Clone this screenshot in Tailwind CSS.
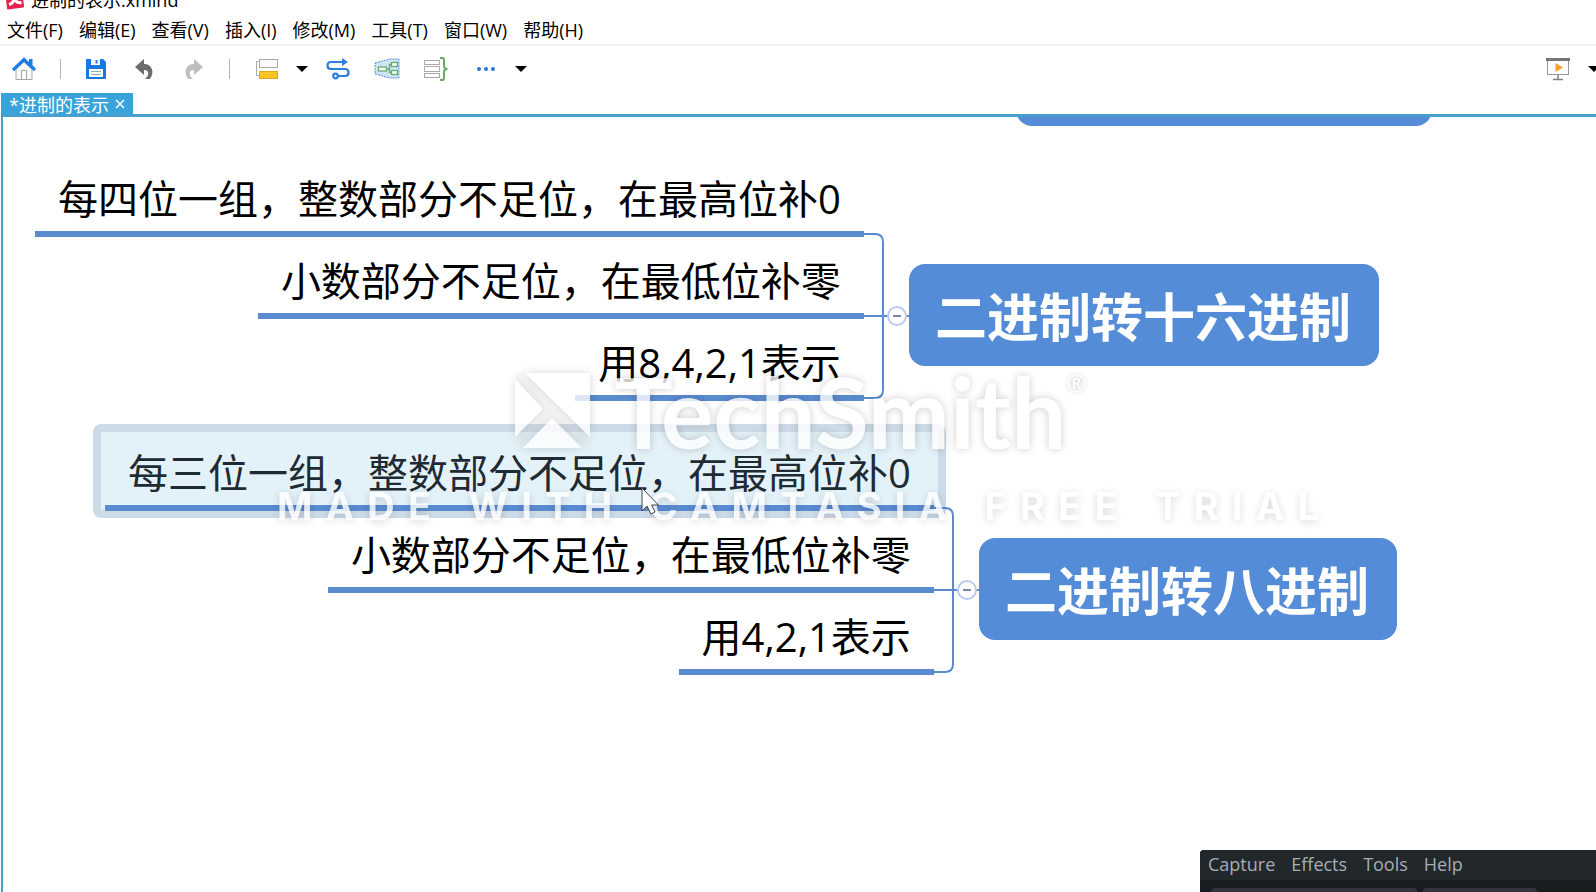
<!DOCTYPE html>
<html lang="zh-CN">
<head>
    <meta charset="UTF-8">
    <meta name="viewport" content="width=device-width, initial-scale=1.0">
    <title>进制的表示.xmind</title>
    <script src="https://cdn.jsdelivr.net/npm/@tailwindcss/browser@4"></script>
</head>
<body class="h-screen flex flex-col overflow-hidden bg-white text-black font-['Open_Sans','Noto_Sans_CJK_SC',sans-serif]">
    <!-- Title bar -->
    <div class="h-3.5 shrink-0 flex items-end gap-1.5 pl-[5px] pb-1 overflow-hidden">
        <svg class="w-5 h-5 shrink-0" viewBox="0 0 20 20">
            <path d="M0 2 L17 0 L19 16 Q19 17.500 18 17.500 L3 19.500 Q2 19.500 2 18 Z" fill="#e5214d"/>
            <path d="M4 14.500 Q8 13.500 9.500 9 Q12 13.500 16.500 12.500 M7 4 L9.500 9 L13 5" fill="none" stroke="#fff" stroke-width="3"/>
        </svg>
        <span class="text-lg leading-5 whitespace-nowrap">进制的表示.xmind</span>
    </div>

    <!-- Menu bar -->
    <nav class="h-8 shrink-0 flex items-center gap-4 pl-[7px] pt-0.5 border-b-2 border-[#f1f1f1] text-lg leading-6 whitespace-nowrap">
        <a href="#">文件(F)</a>
        <a href="#">编辑(E)</a>
        <a href="#">查看(V)</a>
        <a href="#">插入(I)</a>
        <a href="#">修改(M)</a>
        <a href="#">工具(T)</a>
        <a href="#">窗口(W)</a>
        <a href="#">帮助(H)</a>
    </nav>

    <!-- Toolbar -->
    <div class="h-[47px] shrink-0 flex items-center gap-6 pl-3 pb-0.5 overflow-hidden">
        <button aria-label="主页">
            <svg class="w-6 h-6" viewBox="0 0 24 24">
                <path d="M4 12 V22.500 H20 V12 L12 5 Z" fill="#fafafa" stroke="#a5a5a5"/>
                <path d="M9.500 22 V13.500 H14.500 V22" fill="#fff" stroke="#a5a5a5"/>
                <path d="M17 2 H20.500 V9 H17 Z" fill="#1f7de6"/>
                <path d="M1 13 L12 2.500 L23 13" fill="none" stroke="#1f7de6" stroke-width="3.200"/>
            </svg>
        </button>
        <span class="w-px h-5 bg-[#b5b5b5]"></span>
        <button aria-label="保存">
            <svg class="w-6 h-6" viewBox="0 0 24 24">
                <path d="M1 3 Q1 2 2 2 H18 L21 5 V21 Q21 22 20 22 H2 Q1 22 1 21 Z" fill="#1878e2"/>
                <path d="M6 2 H15 V8 H6 Z" fill="#fff"/>
                <path d="M10.500 3 H12.500 V6.500 H10.500 Z" fill="#1878e2"/>
                <path d="M4 12 H18 V20 H4 Z" fill="#fff"/>
                <path d="M6 14.500 H16 M6 17.500 H16" stroke="#9aa7b5"/>
            </svg>
        </button>
        <button aria-label="撤销">
            <svg class="w-6 h-6" viewBox="0 0 24 24">
                <path d="M2 10 L11 2 V7 C19 7 22 15 17 22 H12 C17 18 16 13 11 13 V18 Z" fill="#6c6c6c"/>
            </svg>
        </button>
        <button aria-label="重做">
            <svg class="w-6 h-6" viewBox="0 0 24 24">
                <path d="M22 10 L13 2 V7 C5 7 2 15 7 22 H12 C7 18 8 13 13 13 V18 Z" fill="#bebebe"/>
            </svg>
        </button>
        <span class="w-px h-5 bg-[#b5b5b5]"></span>
        <div class="flex items-center gap-[18px] -mr-1.5">
            <button aria-label="主题">
                <svg class="w-6 h-6" viewBox="0 0 24 24">
                    <path d="M5 4.500 H2.500 V18.500 H5" fill="none" stroke="#aaa"/>
                    <rect x="5.500" y="2.500" width="18" height="8" fill="#fafafa" stroke="#aaa"/>
                    <rect x="5.500" y="14.500" width="18" height="7" fill="#fcc622" stroke="#dfa51c"/>
                </svg>
            </button>
            <button aria-label="更多主题">
                <svg class="w-3 h-3" viewBox="0 0 12 12"><path d="M0 3 H12 L6 9 Z"/></svg>
            </button>
        </div>
        <button aria-label="联系">
            <svg class="w-6 h-6" viewBox="0 0 24 24" fill="none" stroke="#2a80dc" stroke-width="2.200">
                <path d="M17 5 H5 Q1.500 5 1.500 8.500 Q1.500 12 5 12 H19 Q22.500 12 22.500 15.500 Q22.500 19 19 19 H12"/>
                <circle cx="9.500" cy="19" r="2.300"/>
                <path d="M16 1 L22 5 L16 9 Z" fill="#2a80dc" stroke="none"/>
            </svg>
        </button>
        <button aria-label="外框">
            <svg class="w-[26px] h-6" viewBox="0 0 26 24" fill="none">
                <path d="M1 6 L16 2 H25 V21 H16 L1 17 Z" fill="#cfe5f7" stroke="#4a90d9" stroke-dasharray="2 1"/>
                <g stroke="#64ad62" stroke-width="1.300">
                    <path d="M13 12 H15.500 M19 7.500 H15.500 V15.500 H19"/>
                    <rect x="4.500" y="10" width="8" height="4" fill="#fff"/>
                    <rect x="17.500" y="5.500" width="6" height="4" fill="#fff"/>
                    <rect x="17.500" y="13.500" width="6" height="4" fill="#fff"/>
                </g>
            </svg>
        </button>
        <button aria-label="概要">
            <svg class="w-6 h-6" viewBox="0 0 24 24" fill="none">
                <g stroke="#aaa">
                    <rect x="0.500" y="3.500" width="15" height="4"/>
                    <rect x="0.500" y="9.500" width="15" height="5"/>
                    <rect x="0.500" y="16.500" width="15" height="4"/>
                </g>
                <path d="M16 1 H18.500 Q20 1 20 3 V9 Q20 12 23.500 12 Q20 12 20 15 V21 Q20 23 18.500 23 H16" stroke="#64ad62" stroke-width="2"/>
            </svg>
        </button>
        <div class="flex items-center gap-[18px] pl-px">
            <button aria-label="更多">
                <svg class="w-6 h-6" viewBox="0 0 24 24" fill="#2a78d4">
                    <circle cx="6" cy="12" r="2"/><circle cx="13" cy="12" r="2"/><circle cx="20" cy="12" r="2"/>
                </svg>
            </button>
            <button aria-label="展开更多">
                <svg class="w-3 h-3" viewBox="0 0 12 12"><path d="M0 3 H12 L6 9 Z"/></svg>
            </button>
        </div>
        <div class="ml-auto flex items-center gap-[18px] -mr-1">
            <button aria-label="演示">
                <svg class="w-6 h-6" viewBox="0 0 24 24">
                    <path d="M12 17 V22 M7 22.500 H17" stroke="#7d8380" stroke-width="1.500"/>
                    <rect x="1.500" y="3.500" width="21" height="14" fill="#fcfcfc" stroke="#9a9a9a"/>
                    <rect x="0" y="1" width="24" height="3" fill="#767676"/>
                    <path d="M9.500 6 L17 10.500 L9.500 15 Z" fill="#f5a12c"/>
                </svg>
            </button>
            <button aria-label="演示选项">
                <svg class="w-3 h-3" viewBox="0 0 12 12"><path d="M0 3 H12 L6 9 Z"/></svg>
            </button>
        </div>
    </div>

    <!-- Editor tab -->
    <div class="h-[21px] shrink-0 flex pl-px">
        <div class="flex items-center gap-1.5 px-2 bg-[#3aa3da] text-white text-lg leading-5 whitespace-nowrap">
            <span class="pt-0.5">*进制的表示</span>
            <button aria-label="关闭">
                <svg class="w-2.5 h-2.5" viewBox="0 0 10 10"><path d="M1 1 L9 9 M9 1 L1 9" stroke="#fff" stroke-width="1.500"/></svg>
            </button>
        </div>
    </div>

    <!-- Map canvas -->
    <main class="relative flex-1 ml-px border-t-3 border-l-2 border-[#469fce] overflow-hidden">
        <div class="absolute left-[1013px] -top-10 w-[416px] h-[49px] rounded-2xl bg-[#558cd8]"></div>

        <!-- Binary to hex -->
        <section class="absolute isolate left-8 top-[38px] flex items-start whitespace-nowrap">
            <ul class="flex flex-col items-end text-[40px] leading-[64px]">
                <li class="h-[82px] pt-3 px-[23px] border-b-6 border-[#5a8bd0]">每四位一组，整数部分不足位，在最高位补0</li>
                <li class="h-[82px] pt-3 px-[23px] border-b-6 border-[#5a8bd0]">小数部分不足位，在最低位补零</li>
                <li class="h-[82px] pt-3 px-[23px] border-b-6 border-[#5a8bd0]">用8,4,2,1表示</li>
            </ul>
            <svg class="w-[45px] h-[246px]" viewBox="0 0 45 246" fill="none">
                <path d="M0 79 H11 Q19 79 19 87 V235 Q19 243 11 243 H0 M0 161 H45" stroke="#5a8bd0" stroke-width="2"/>
                <circle cx="33" cy="161" r="9" fill="#fff" stroke="#b9caf0" stroke-width="2"/>
                <path d="M29 161 H37" stroke="#7d87a8" stroke-width="2"/>
            </svg>
            <h2 class="mt-[109px] h-[102px] pl-[26px] pr-7 rounded-2xl bg-[#558cd8] text-white text-[52px] leading-[106px] font-bold">二进制转十六进制</h2>
        </section>

        <!-- Binary to octal -->
        <section class="absolute isolate left-[102px] top-[312px] flex items-start whitespace-nowrap">
            <ul class="flex flex-col items-end text-[40px] leading-[64px]">
                <li class="relative h-[82px] pt-3 px-[23px] border-b-6 border-[#5a8bd0] text-[#1f2b33]">
                    <div class="absolute -z-10 -inset-x-3 -top-[5px] -bottom-[13px] rounded-lg border-8 border-[#cddbe8] bg-[#e3f1f9]"></div>
                    每三位一组，整数部分不足位，在最高位补0
                </li>
                <li class="h-[82px] pt-3 px-[23px] border-b-6 border-[#5a8bd0]">小数部分不足位，在最低位补零</li>
                <li class="h-[82px] pt-3 px-[23px] border-b-6 border-[#5a8bd0]">用4,2,1表示</li>
            </ul>
            <svg class="w-[45px] h-[246px]" viewBox="0 0 45 246" fill="none">
                <path d="M0 79 H11 Q19 79 19 87 V235 Q19 243 11 243 H0 M0 161 H45" stroke="#5a8bd0" stroke-width="2"/>
                <circle cx="33" cy="161" r="9" fill="#fff" stroke="#b9caf0" stroke-width="2"/>
                <path d="M29 161 H37" stroke="#7d87a8" stroke-width="2"/>
            </svg>
            <h2 class="mt-[109px] h-[102px] pl-[26px] pr-7 rounded-2xl bg-[#558cd8] text-white text-[52px] leading-[106px] font-bold">二进制转八进制</h2>
        </section>

        <!-- Watermark -->
        <div class="absolute left-[512px] top-[248px] flex items-start gap-6 text-white opacity-80 pointer-events-none whitespace-nowrap">
            <svg class="mt-2 w-[75px] h-[75px] overflow-visible drop-shadow-[0_0_5px_rgb(0_0_0/0.2)]" viewBox="0 0 75 75" fill="#fff">
                <path d="M0 0 H75 V75 H0 Z" fill="#ddd" fill-opacity="0.200"/>
                <path d="M10 0 H75 V64 Z"/>
                <path d="M0 6 L28 36 L0 64 Z"/>
                <path d="M37 45 L67 75 H8 Z"/>
            </svg>
            <div class="flex items-start">
                <span class="text-[98px] leading-[92px] font-bold font-[Lato] text-shadow-[0_0_8px_rgb(0_0_0/0.25)]">TechSmith</span>
                <span class="text-2xl leading-9 text-shadow-[0_0_4px_rgb(0_0_0/0.3)]">®</span>
            </div>
        </div>
        <div class="absolute left-[274px] top-[361px] flex gap-6 text-white opacity-80 font-[Inter] text-[38px] leading-[56px] font-bold tracking-[0.35em] pointer-events-none whitespace-nowrap text-shadow-[0_2px_8px_rgb(0_0_0/0.2)]">
            <span>MADE</span>
            <span>WITH</span>
            <span>CAMTASIA</span>
            <span>FREE</span>
            <span>TRIAL</span>
        </div>

        <!-- Mouse pointer -->
        <svg class="absolute left-[638px] top-[370px] w-5 h-7" viewBox="0 0 20 28">
            <path d="M1 1 V24 L6 19 L10 27 L14 25 L10.500 18 H17.500 Z" fill="#fff" stroke="#444"/>
        </svg>

        <!-- Recorder window -->
        <aside class="absolute right-0 bottom-0 w-[396px] h-[42px] rounded-tl bg-[#1a1d20] overflow-hidden">
            <nav class="h-[30px] flex items-center gap-4 pl-2 pb-0.5 bg-[#22272c] text-[#a7adb1] text-lg leading-6">
                <a href="#">Capture</a>
                <a href="#">Effects</a>
                <a href="#">Tools</a>
                <a href="#">Help</a>
            </nav>
            <div class="flex gap-1.5 mt-2 pl-[11px]">
                <div class="w-[206px] h-4 rounded bg-[#33343f]"></div>
                <div class="w-[114px] h-4 rounded bg-[#33343f]"></div>
            </div>
        </aside>
    </main>
</body>
</html>
